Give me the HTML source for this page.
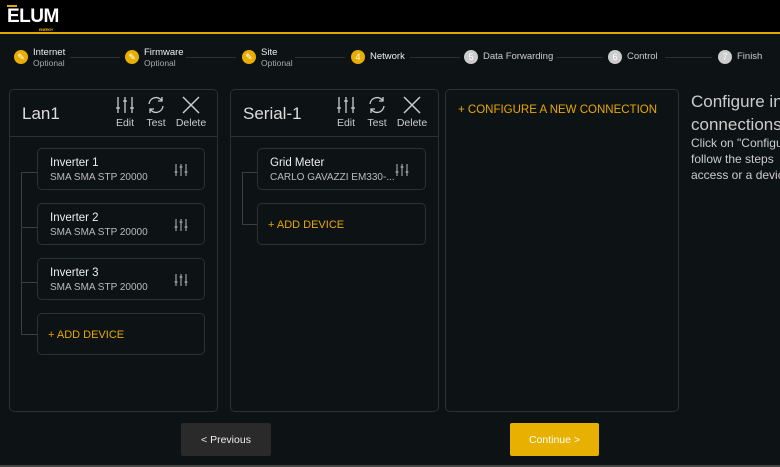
<!DOCTYPE html>
<html><head><style>
*{box-sizing:border-box;margin:0;padding:0}
body{width:780px;height:467px;background:#0d1214;font-family:"Liberation Sans",sans-serif;color:#ddd;position:relative;overflow:hidden}
.hdr{position:absolute;left:0;top:0;width:780px;height:34px;background:#000;border-bottom:2px solid #e0a800}
.logo{position:absolute;left:7px;top:6px;font-weight:bold;font-size:19px;color:#fff;letter-spacing:-0.5px}
.logo:before{content:"";position:absolute;left:0;top:-1px;width:10px;height:2px;background:#e0a800}
.logo small{position:absolute;left:32px;top:21px;font-size:4px;color:#e0a800}
.step{position:absolute;top:47px;font-size:9.5px;color:#eee;line-height:10px}
.step .c{position:absolute;left:0;top:3px;width:14px;height:14px;border-radius:50%;background:#e8ae00;color:#fff;font-size:9px;text-align:center;line-height:14px}
.step .c.g{background:#ccc}
.step .t{position:absolute;left:19px;top:1px;white-space:nowrap}
.step .t i{font-style:normal;font-size:8.5px;color:#aaa;display:block}
.ln{position:absolute;top:57px;height:1px;background:#2c3133}
.panel{position:absolute;top:89px;height:323px;border:1px solid #2c3133;border-radius:5px}
.ph{position:absolute;left:0;right:0;top:0;height:47px;border-bottom:1px solid #2c3133}
.ph .ttl{position:absolute;left:12px;top:14px;font-size:17px;color:#ddd}
.act{position:absolute;top:5px;font-size:10.5px;color:#ccc;text-align:center;width:32px}
.act svg{display:block;margin:0 auto 2px}
.card{position:absolute;border:1px solid #2c3133;border-radius:5px;height:42px}
.card b{position:absolute;left:12px;top:8px;font-size:11.5px;font-weight:normal;color:#eee}
.card span{position:absolute;left:12px;top:23px;font-size:10px;color:#bbb;white-space:nowrap}
.card svg{position:absolute;right:16px;top:14px}
.add{color:#e8a800;font-size:11px;line-height:42px;padding-left:10px}
.tree{position:absolute;border-left:1px solid #3a3f41}
.h{position:absolute;height:1px;background:#3a3f41}
.btn{position:absolute;top:423px;height:33px;border-radius:2px;font-size:10.5px;text-align:center;line-height:34px}
</style></head><body>
<div class="hdr"><div class="logo">ELUM<small>ENERGY</small></div></div>

<div class="step" style="left:14px"><div class="c">✎</div><div class="t">Internet<i>Optional</i></div></div>
<div class="ln" style="left:70px;width:50px"></div>
<div class="step" style="left:125px"><div class="c">✎</div><div class="t">Firmware<i>Optional</i></div></div>
<div class="ln" style="left:186px;width:50px"></div>
<div class="step" style="left:242px"><div class="c">✎</div><div class="t">Site<i>Optional</i></div></div>
<div class="ln" style="left:295px;width:50px"></div>
<div class="step" style="left:351px"><div class="c">4</div><div class="t" style="top:5px">Network</div></div>
<div class="ln" style="left:410px;width:50px"></div>
<div class="step" style="left:464px"><div class="c g">5</div><div class="t" style="top:5px;color:#ccc">Data Forwarding</div></div>
<div class="ln" style="left:556px;width:47px"></div>
<div class="step" style="left:608px"><div class="c g">6</div><div class="t" style="top:5px;color:#ccc">Control</div></div>
<div class="ln" style="left:665px;width:47px"></div>
<div class="step" style="left:718px"><div class="c g">7</div><div class="t" style="top:5px;color:#ccc">Finish</div></div>

<svg width="0" height="0" style="position:absolute"><defs>
<g id="sl" stroke="#ccc" stroke-width="1.3" fill="none"><path d="M3 2v16M10 2v16M17 2v16M1 13h4M8 6h4M15 13h4"/></g>
<g id="rf" stroke="#ccc" stroke-width="1.3" fill="none"><path d="M3 9a7 7 0 0 1 13-3M17 11a7 7 0 0 1-13 3"/><path d="M16 2v4h-4M4 18v-4h4"/></g>
<g id="x" stroke="#ccc" stroke-width="1.5"><path d="M2 2l16 16M18 2L2 18"/></g>
<g id="ss" stroke="#bbb" stroke-width="1" fill="none"><path d="M2 1v12M7 1v12M12 1v12M0.5 9h3M5.5 4h3M10.5 9h3"/></g>
</defs></svg>

<div class="panel" style="left:9px;width:209px">
 <div class="ph"><div class="ttl">Lan1</div>
  <div class="act" style="left:99px"><svg width="20" height="20"><use href="#sl"/></svg>Edit</div>
  <div class="act" style="left:130px"><svg width="20" height="20"><use href="#rf"/></svg>Test</div>
  <div class="act" style="left:165px"><svg width="20" height="20"><use href="#x"/></svg>Delete</div>
 </div>
</div>
<div class="tree" style="left:21px;top:172px;height:163px"></div>
<div class="h" style="left:21px;top:172px;width:16px"></div>
<div class="h" style="left:21px;top:227px;width:16px"></div>
<div class="h" style="left:21px;top:282px;width:16px"></div>
<div class="h" style="left:21px;top:334px;width:16px"></div>
<div class="card" style="left:37px;top:148px;width:168px"><b>Inverter 1</b><span>SMA SMA STP 20000</span><svg width="14" height="14"><use href="#ss"/></svg></div>
<div class="card" style="left:37px;top:203px;width:168px"><b>Inverter 2</b><span>SMA SMA STP 20000</span><svg width="14" height="14"><use href="#ss"/></svg></div>
<div class="card" style="left:37px;top:258px;width:168px"><b>Inverter 3</b><span>SMA SMA STP 20000</span><svg width="14" height="14"><use href="#ss"/></svg></div>
<div class="card add" style="left:37px;top:313px;width:168px">+ ADD DEVICE</div>

<div class="panel" style="left:230px;width:209px">
 <div class="ph"><div class="ttl">Serial-1</div>
  <div class="act" style="left:99px"><svg width="20" height="20"><use href="#sl"/></svg>Edit</div>
  <div class="act" style="left:130px"><svg width="20" height="20"><use href="#rf"/></svg>Test</div>
  <div class="act" style="left:165px"><svg width="20" height="20"><use href="#x"/></svg>Delete</div>
 </div>
</div>
<div class="tree" style="left:242px;top:172px;height:52px"></div>
<div class="h" style="left:242px;top:172px;width:15px"></div>
<div class="h" style="left:242px;top:224px;width:15px"></div>
<div class="card" style="left:257px;top:148px;width:169px"><b>Grid Meter</b><span>CARLO GAVAZZI EM330-...</span><svg width="14" height="14"><use href="#ss"/></svg></div>
<div class="card add" style="left:257px;top:203px;width:169px">+ ADD DEVICE</div>

<div class="panel" style="left:445px;width:234px"><div style="position:absolute;left:12px;top:14px;color:#e8a800;font-size:11.5px">+ CONFIGURE A NEW CONNECTION</div></div>

<div style="position:absolute;left:691px;top:90px;font-size:17px;color:#ccc;line-height:23px;white-space:nowrap">Configure in<br>connections</div>
<div style="position:absolute;left:691px;top:135px;font-size:12px;color:#ccc;line-height:16px;white-space:nowrap">Click on "Configu<br>follow the steps<br>access or a devic</div>

<div class="btn" style="left:181px;width:90px;background:#2a2a2a;color:#eee">&lt; Previous</div>
<div class="btn" style="left:510px;width:89px;background:#e8b000;color:#fff">Continue &gt;</div>
<div style="position:absolute;left:0;top:465px;width:780px;height:2px;background:#444"></div>
</body></html>
